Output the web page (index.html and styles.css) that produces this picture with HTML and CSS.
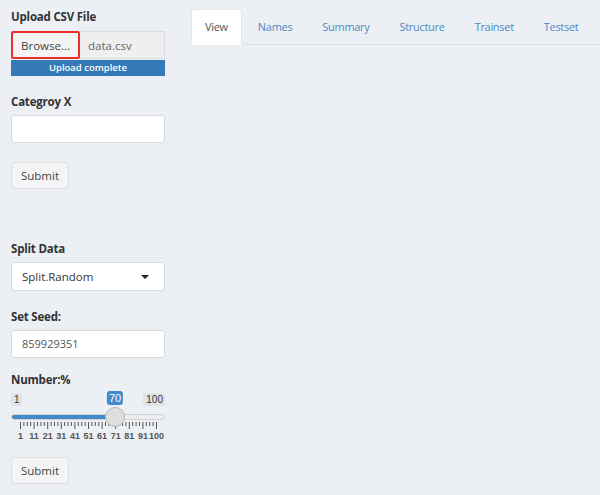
FILE: index.html
```html
<!DOCTYPE html>
<html>
<head>
<meta charset="utf-8">
<link rel="stylesheet" href="styles.css">
</head>
<body>
<div class="page">
  <aside class="sidebar">
    <div class="group g-upload">
      <label class="label">Upload CSV File</label>
      <div class="file-row">
        <span class="browse">Browse...</span>
        <span class="file-name">data.csv</span>
      </div>
      <div class="progress">Upload complete</div>
    </div>
    <div class="group g-cat">
      <label class="label">Categroy X</label>
      <div class="input"></div>
    </div>
    <button class="btn b-1">Submit</button>
    <div class="group g-split">
      <label class="label">Split Data</label>
      <div class="select">
        <span>Split.Random</span>
        <span class="caret"></span>
      </div>
    </div>
    <div class="group g-seed">
      <label class="label">Set Seed:</label>
      <div class="input">859929351</div>
    </div>
    <div class="group g-num">
      <label class="label">Number:%</label>
      <div class="slider">
        <div class="minmax">
          <span class="badge">1</span>
          <span class="badge">100</span>
        </div>
        <span class="badge value" style="left: 104px">70</span>
        <div class="track"><div class="fill" style="width: 104px"></div></div>
        <span class="thumb" style="left: 94px"></span>
        <svg class="grid" width="154" height="20" viewBox="0 0 154 20">
          <g stroke="#555" stroke-width="1">
            <path d="M9.5 0v7M23.1 0v7M36.7 0v7M50.3 0v7M63.9 0v7M77.5 0v7M91.1 0v7M104.7 0v7M118.3 0v7M131.9 0v7M145.5 0v7"/>
            <path d="M12.9 0v4M16.3 0v4M19.7 0v4M26.5 0v4M29.9 0v4M33.3 0v4M40.1 0v4M43.5 0v4M46.9 0v4M53.7 0v4M57.1 0v4M60.5 0v4M67.3 0v4M70.7 0v4M74.1 0v4M80.9 0v4M84.3 0v4M87.7 0v4M94.5 0v4M97.9 0v4M101.3 0v4M108.1 0v4M111.5 0v4M114.9 0v4M121.7 0v4M125.1 0v4M128.5 0v4M135.3 0v4M138.7 0v4M142.1 0v4"/>
          </g>
          <g class="ticklabels" text-anchor="middle">
            <text x="9.5" y="17">1</text>
            <text x="23.1" y="17">11</text>
            <text x="36.7" y="17">21</text>
            <text x="50.3" y="17">31</text>
            <text x="63.9" y="17">41</text>
            <text x="77.5" y="17">51</text>
            <text x="91.1" y="17">61</text>
            <text x="104.7" y="17">71</text>
            <text x="118.3" y="17">81</text>
            <text x="131.9" y="17">91</text>
            <text x="145.5" y="17">100</text>
          </g>
        </svg>
      </div>
    </div>
    <button class="btn b-2">Submit</button>
  </aside>
  <main class="main">
    <ul class="tabs">
      <li class="tab active">View</li>
      <li class="tab">Names</li>
      <li class="tab">Summary</li>
      <li class="tab">Structure</li>
      <li class="tab">Trainset</li>
      <li class="tab">Testset</li>
    </ul>
  </main>
</div>
</body>
</html>
```
FILE: styles.css
```css
* { box-sizing: border-box; }
html, body {
  margin: 0;
  padding: 0;
  background: #ecf0f5;
  width: 600px;
  height: 495px;
  overflow: hidden;
  font-family: "Open Sans", "Noto Sans", sans-serif;
  font-size: 12px;
  color: #333;
}
.page {
  display: flex;
  align-items: flex-start;
}
.sidebar {
  width: 165px;
  padding-left: 11px;
  padding-top: 7px;
  display: flex;
  flex-direction: column;
  align-items: flex-start;
}
.group {
  width: 154px;
  display: flex;
  flex-direction: column;
}
.label {
  font-weight: bold;
  font-size: 11.5px;
  letter-spacing: -0.2px;
  line-height: 20px;
  height: 20px;
  color: #333;
}
.file-row {
  margin-top: 4px;
  display: flex;
  height: 28px;
}
.browse {
  width: 69px;
  border: 2px solid #e8302e;
  border-radius: 2px;
  background: #f4f4f4;
  color: #444;
  font-size: 11.5px;
  display: flex;
  align-items: center;
  justify-content: center;
}
.file-name {
  flex: 1;
  background: #efefef;
  border: 1px solid #dcdcdc;
  border-left: none;
  color: #666;
  font-size: 11.5px;
  display: flex;
  align-items: center;
  padding-left: 8px;
}
.progress {
  margin-top: 1px;
  height: 16px;
  background: #337ab7;
  color: #fff;
  font-size: 9.5px;
  font-weight: 600;
  line-height: 16px;
  text-align: center;
}
.g-cat { margin-top: 16px; }
.input {
  margin-top: 3px;
  height: 28px;
  background: #fff;
  border: 1px solid #d6dae0;
  border-radius: 3px;
  padding-left: 10px;
  line-height: 26px;
  color: #555;
  font-size: 11px;
}
.btn {
  font-family: inherit;
  font-size: 11.5px;
  color: #444;
  background: #f4f4f4;
  border: 1px solid #dcdfe3;
  border-radius: 3px;
  width: 58px;
  height: 27px;
  padding: 0;
  margin: 0;
}
.b-1 { margin-top: 19px; }
.g-split { margin-top: 50px; }
.select {
  margin-top: 3px;
  height: 29px;
  background: #fff;
  border: 1px solid #d6dae0;
  border-radius: 3px;
  padding: 0 15px 0 10px;
  display: flex;
  align-items: center;
  justify-content: space-between;
  color: #333;
  font-size: 11.5px;
}
.caret {
  width: 0;
  height: 0;
  border-left: 4px solid transparent;
  border-right: 4px solid transparent;
  border-top: 4px solid #222;
}
.g-seed { margin-top: 16px; }
.g-num { margin-top: 12px; }
.slider {
  position: relative;
  height: 58px;
}
.minmax {
  margin-top: 3px;
  display: flex;
  justify-content: space-between;
  height: 13px;
}
.badge {
  font-family: "Liberation Sans", Arial, sans-serif;
  font-size: 10px;
  line-height: 13px;
  padding: 0 2px 0 3px;
  background: #dfe2e6;
  color: #333;
  border-radius: 3px;
}
.badge.value {
  position: absolute;
  top: 1px;
  transform: translateX(-50%);
  background: #428bca;
  color: #fff;
  font-size: 11px;
  line-height: 14px;
  padding: 0 2px;
}
.track {
  margin-top: 8px;
  height: 6px;
  border-radius: 3px;
  background: #eeeeee;
  border: 1px solid #d0d0d0;
  overflow: hidden;
}
.fill {
  height: 100%;
  background: #428bca;
}
.thumb {
  position: absolute;
  top: 17px;
  width: 20px;
  height: 20px;
  border-radius: 50%;
  background: #dedede;
  border: 1px solid #b8b8b8;
}
.grid {
  display: block;
  margin-top: 2px;
}
.ticklabels {
  font-family: "Liberation Sans", Arial, sans-serif;
  font-size: 9px;
  font-weight: bold;
  fill: #555;
}
.b-2 { margin-top: 9px; }
.main {
  margin-left: 26px;
  flex: 1;
  padding-top: 9px;
}
.tabs {
  list-style: none;
  margin: 0;
  padding: 0;
  display: flex;
  border-bottom: 1px solid #dde1e7;
}
.tab {
  height: 36px;
  line-height: 34px;
  padding: 0 13px;
  margin-right: 2px;
  margin-bottom: -1px;
  font-size: 11px;
  letter-spacing: -0.3px;
  color: #4a89c4;
  border: 1px solid transparent;
  border-radius: 4px 4px 0 0;
}
.tab.active {
  background: #fff;
  color: #555;
  border-color: #e3e6ea #e3e6ea transparent;
}
```
